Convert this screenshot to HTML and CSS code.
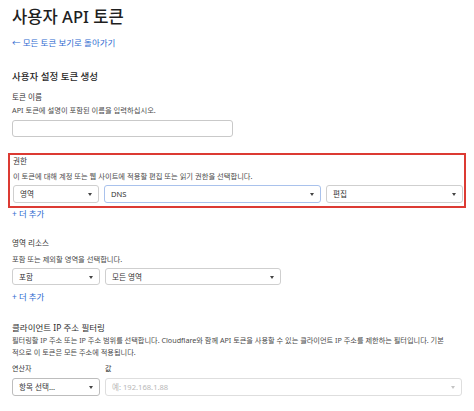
FILE: index.html
```html
<!DOCTYPE html>
<html lang="ko">
<head>
<meta charset="utf-8">
<title>사용자 API 토큰</title>
<link rel="stylesheet" href="styles.css">
</head>
<body>
  <h1 class="title">사용자 API 토큰</h1>
  <a class="back" href="#">← 모든 토큰 보기로 돌아가기</a>
  <h2 class="subtitle">사용자 설정 토큰 생성</h2>

  <div class="label first">토큰 이름</div>
  <div class="desc tight">API 토큰에 설명이 포함된 이름을 입력하십시오.</div>
  <div class="text-input"></div>

  <section class="highlight">
    <div class="label">권한</div>
    <div class="desc gap4">이 토큰에 대해 계정 또는 웹 사이트에 적용할 편집 또는 읽기 권한을 선택합니다.</div>
    <div class="row perm-row">
      <div class="select">영역</div>
      <div class="select focus">DNS</div>
      <div class="select">편집</div>
    </div>
  </section>
  <a class="add" href="#">+ 더 추가</a>

  <div class="label sec">영역 리소스</div>
  <div class="desc gap5">포함 또는 제외할 영역을 선택합니다.</div>
  <div class="row res-row">
    <div class="select">포함</div>
    <div class="select">모든 영역</div>
  </div>
  <a class="add add2" href="#">+ 더 추가</a>

  <div class="ip-title">클라이언트 IP 주소 필터링</div>
  <div class="desc multi">필터링할 IP 주소 또는 IP 주소 범위를 선택합니다. Cloudflare와 함께 API 토큰을 사용할 수 있는 클라이언트 IP 주소를 제한하는 필터입니다. 기본<br>적으로 이 토큰은 모든 주소에 적용됩니다.</div>
  <div class="row ip-labels">
    <div class="small-label">연산자</div>
    <div class="small-label">값</div>
  </div>
  <div class="row ip-row">
    <div class="select dark">항목 선택...</div>
    <div class="select placeholder light-arrow">예: 192.168.1.88</div>
  </div>
</body>
</html>
```

FILE: styles.css
```css
* { box-sizing: border-box; }

body {
  margin: 0;
  padding: 7px 12px 0;
  background: #ffffff;
  font-family: "Noto Sans", "Noto Sans CJK KR", sans-serif;
  color: #2b2b2b;
}

.title {
  margin: 0;
  font-size: 16.6px;
  line-height: 20px;
  font-weight: 500;
  color: #1f1f1f;
}

.back {
  display: block;
  margin-top: 10px;
  font-size: 8.5px;
  line-height: 12px;
  color: #2f6bd0;
  text-decoration: none;
}

.subtitle {
  margin: 21px 0 0;
  font-size: 9.5px;
  line-height: 14px;
  font-weight: 500;
  color: #1f1f1f;
}

.label {
  font-size: 7.6px;
  line-height: 11px;
  color: #333333;
}
.label.first { margin-top: 8px; }
.label.sec { margin-top: 18.5px; }

.desc {
  font-size: 7.3px;
  line-height: 10px;
  color: #4a4a4a;
  white-space: nowrap;
}
.desc.tight { margin-top: 2px; }
.desc.gap4 { margin-top: 4px; }
.desc.gap5 { margin-top: 5.5px; }
.desc.multi {
  margin-top: 1px;
  line-height: 11.5px;
  font-size: 7.2px;
}

.text-input {
  margin-top: 5px;
  width: 221px;
  height: 17px;
  border: 1px solid #c9c9c9;
  border-radius: 3px;
  background: #fff;
}

.highlight {
  margin: 16px -4px 0 -4px;
  border: 2px solid #dc3a33;
  padding: 1px 1px 3px 3px;
}

.row { display: grid; }

.perm-row {
  margin-top: 4px;
  grid-template-columns: 86px 217px 137px;
  column-gap: 5px;
}

.res-row {
  margin-top: 4px;
  grid-template-columns: 88px 176px;
  column-gap: 5px;
}
.res-row .select { height: 17px; }

.select {
  position: relative;
  height: 18px;
  border: 1px solid #cfcfcf;
  border-radius: 3px;
  background: #fff;
  padding-left: 6px;
  font-size: 7.6px;
  line-height: 16px;
  color: #333;
}
.select::after {
  content: "";
  position: absolute;
  right: 6px;
  top: 7px;
  border-left: 2.5px solid transparent;
  border-right: 2.5px solid transparent;
  border-top: 3px solid #444;
}
.select.focus { border-color: #a9c2ec; }
.select.dark { border-color: #bdbdbd; }
.select.placeholder { color: #b8b8b8; border-color: #dedede; }
.select.light-arrow::after { border-top-color: #c4c4c4; }

.add {
  display: block;
  font-size: 8.4px;
  line-height: 11px;
  color: #2f6bd0;
  text-decoration: none;
}
.add2 { margin-top: 5.5px; }

.ip-title {
  margin-top: 20.5px;
  font-size: 8.5px;
  line-height: 12px;
  color: #2b2b2b;
}

.ip-labels {
  margin-top: 6px;
  grid-template-columns: 88px 357px;
  column-gap: 5px;
}
.small-label {
  font-size: 7px;
  line-height: 10px;
  color: #333;
}

.ip-row {
  margin-top: 4px;
  grid-template-columns: 88px 357px;
  column-gap: 5px;
}
```
